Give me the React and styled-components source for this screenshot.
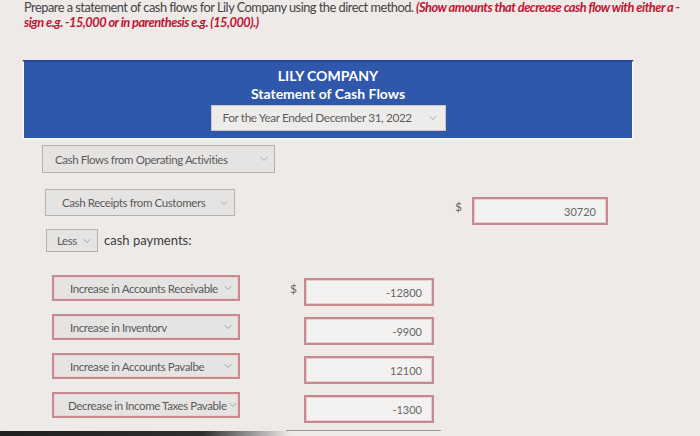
import React from 'react';
import styled, { createGlobalStyle } from 'styled-components';
import { ChevronDown } from 'lucide-react';

const GlobalStyle = createGlobalStyle`
  html, body {
    margin: 0;
    padding: 0;
    background: #edeae8;
    overflow: hidden;
  }
  body {
    font-family: Lato, "Open Sans", sans-serif;
  }
`;

const Page = styled.div`
  width: 700px;
  height: 436px;
  overflow: hidden;
  display: flex;
  flex-direction: column;
`;

const Instructions = styled.div`
  padding-left: 24px;
  font-size: 12.8px;
  line-height: 15px;
  letter-spacing: -0.5px;
  color: #444;
  white-space: nowrap;
`;

const Warn = styled.span`
  color: #c4122f;
  font-weight: 700;
  font-style: italic;
`;

const Header = styled.div`
  margin: 30px 66px 0 22px;
  height: 80px;
  box-sizing: border-box;
  padding-top: 5px;
  background: #2f58ad;
  border: 2px solid #f6f5f3;
  border-top-color: #26479a;
  display: flex;
  flex-direction: column;
  align-items: center;
  color: #fff;
  font-weight: 700;
  font-size: 14px;
  line-height: 18px;
`;

const Period = styled.div`
  margin-top: 2px;
  width: 235px;
  height: 26px;
  box-sizing: border-box;
  background: #eeecea;
  border: 1px solid #c9c7c5;
  display: flex;
  align-items: center;
  justify-content: space-between;
  padding: 0 6px 0 11px;
  color: #5c5c5c;
  font-weight: 400;
  font-size: 11.8px;
  letter-spacing: -0.4px;
  white-space: nowrap;
`;

const Body = styled.div`
  flex: 1;
  display: flex;
  flex-direction: column;
`;

const Select = styled.div`
  width: ${p => p.$w}px;
  height: ${p => p.$h || 27}px;
  margin-left: ${p => p.$left}px;
  box-sizing: border-box;
  background: #e6e4e2;
  border: ${p => (p.$alert ? '2px solid #c58b90' : '1px solid #b3b1af')};
  box-shadow: ${p => (p.$alert ? 'inset 0 0 0 1px #ead3d5' : 'none')};
  display: flex;
  align-items: center;
  justify-content: space-between;
  padding: 0 4px 0 ${p => p.$pad || 12}px;
  color: #5a5a5a;
  font-size: 11.5px;
  letter-spacing: -0.4px;
  white-space: nowrap;
  flex-shrink: 0;
`;

const Chevron = styled(ChevronDown)`
  color: #9ba3ad;
  flex-shrink: 0;
`;

const Row = styled.div`
  display: flex;
  align-items: flex-start;
  margin-top: ${p => p.$top}px;
`;

const Dollar = styled.span`
  width: ${p => p.$w}px;
  margin-left: ${p => p.$gap}px;
  margin-top: ${p => p.$dy}px;
  font-size: 12px;
  color: #666;
`;

const ValueBox = styled.div`
  width: ${p => p.$w}px;
  height: 28px;
  margin-top: ${p => p.$dy}px;
  box-sizing: border-box;
  background: #f4f2f1;
  border: 2px solid #c48a90;
  box-shadow: inset 0 0 0 1px #e7cdd0;
  display: flex;
  align-items: center;
  justify-content: flex-end;
  padding-right: 10px;
  font-size: 11px;
  color: #666;
  flex-shrink: 0;
`;

const PlainLabel = styled.span`
  margin-left: 6px;
  margin-top: 3px;
  font-size: 13px;
  color: #3d3d3d;
`;

const Payments = styled.div`
  margin-top: 23px;
  display: flex;
  flex-direction: column;
  gap: 8px;
`;

const Footer = styled.div`
  margin-top: auto;
  display: flex;
  align-items: flex-end;
  height: 6px;
`;

const Bezel = styled.div`
  width: 290px;
  height: 5px;
  background: linear-gradient(90deg, #1f1f1f 0%, #2f2f2f 70%, rgba(60, 60, 60, 0) 100%);
`;

const TotalRule = styled.div`
  margin-left: -4px;
  margin-bottom: 5px;
  width: 155px;
  border-top: 1px solid #9a9896;
`;

const payments = [
  { label: 'Increase in Accounts Receivable', value: '-12800', dollar: true },
  { label: 'Increase in Inventorv', value: '-9900' },
  { label: 'Increase in Accounts Pavalbe', value: '12100' },
  { label: 'Decrease in Income Taxes Pavable', value: '-1300', pad: 14 },
];

const App = () => (
  <Page>
    <GlobalStyle />
    <Instructions>
      <div>
        Prepare a statement of cash flows for Lily Company using the direct method.{' '}
        <Warn>(Show amounts that decrease cash flow with either a -</Warn>
      </div>
      <div>
        <Warn>sign e.g. -15,000 or in parenthesis e.g. (15,000).)</Warn>
      </div>
    </Instructions>

    <Header>
      <div>LILY COMPANY</div>
      <div>Statement of Cash Flows</div>
      <Period>
        For the Year Ended December 31, 2022
        <Chevron size={12} />
      </Period>
    </Header>

    <Body>
      <Row $top={5}>
        <Select $left={42} $w={233} $h={28}>
          Cash Flows from Operating Activities
          <Chevron size={12} />
        </Select>
      </Row>

      <Row $top={16}>
        <Select $left={45} $w={190} $pad={16}>
          Cash Receipts from Customers
          <Chevron size={12} />
        </Select>
        <Dollar $gap={220} $w={17} $dy={10}>$</Dollar>
        <ValueBox $w={136} $dy={8}>30720</ValueBox>
      </Row>

      <Row $top={4}>
        <Select $left={46} $w={52} $h={23} $pad={10}>
          Less
          <Chevron size={12} />
        </Select>
        <PlainLabel>cash payments:</PlainLabel>
      </Row>

      <Payments>
        {payments.map(p => (
          <Row key={p.label} $top={0}>
            <Select $left={52} $w={188} $h={26} $pad={p.pad || 16} $alert>
              {p.label}
              <Chevron size={12} />
            </Select>
            <Dollar $gap={50} $w={14} $dy={6}>{p.dollar ? '$' : ''}</Dollar>
            <ValueBox $w={130} $dy={3}>{p.value}</ValueBox>
          </Row>
        ))}
      </Payments>

      <Footer>
        <Bezel />
        <TotalRule />
      </Footer>
    </Body>
  </Page>
);

export default App;
